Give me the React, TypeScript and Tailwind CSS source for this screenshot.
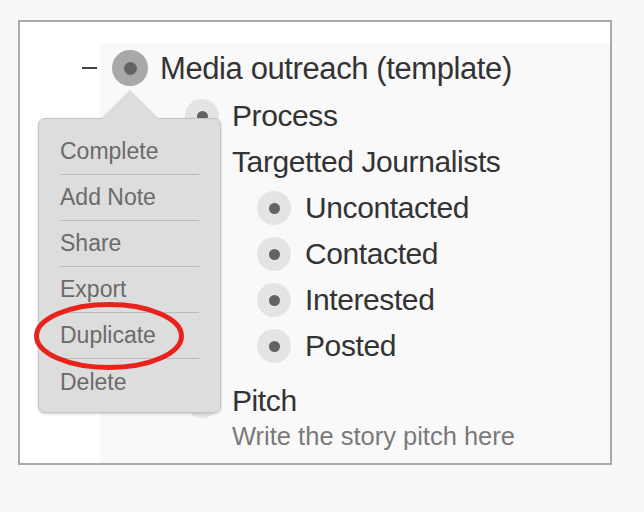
const Bullet = ({ big = false }: { big?: boolean }) =>
  big ? (
    <div className="flex h-9 w-9 shrink-0 items-center justify-center rounded-full bg-[#a9a9a9]">
      <div className="h-[13px] w-[13px] rounded-full bg-[#646464]" />
    </div>
  ) : (
    <div className="flex h-[34px] w-[34px] shrink-0 items-center justify-center rounded-full bg-[#e4e4e4]">
      <div className="h-[11px] w-[11px] rounded-full bg-[#636363]" />
    </div>
  );

const Row = ({ label, indent }: { label: string; indent: "child" | "leaf" }) => (
  <div
    className={
      indent === "child"
        ? "ml-[85px] flex h-[46px] items-center gap-[13px]"
        : "ml-[157px] flex h-[46px] items-center gap-[14px]"
    }
  >
    <Bullet />
    <span className="text-[30px] tracking-[-0.4px] text-[#333]">{label}</span>
  </div>
);

const menu = ["Complete", "Add Note", "Share", "Export", "Duplicate", "Delete"];

export default function App() {
  return (
    <div
      className="min-h-screen bg-[#f8f8f8] pl-[18px] pt-5 antialiased"
      style={{ fontFamily: '"Liberation Sans", Arial, sans-serif' }}
    >
      <div className="relative box-border h-[445px] w-[594px] border-2 border-[#aaaaaa] bg-white pl-20 pt-[21px]">
        <div className="h-full w-full bg-[#f9f9f9] pt-[2px] leading-none">
          {/* root item */}
          <div className="-ml-[18px] flex h-[46px] items-center">
            <div className="h-[2px] w-[15px] bg-[#444]" />
            <div className="ml-[15px]">
              <Bullet big />
            </div>
            <span className="ml-3 text-[31px] tracking-[-0.4px] text-[#333]">Media outreach (template)</span>
          </div>

          <div className="mt-[2px]">
            <Row label="Process" indent="child" />
            <Row label="Targetted Journalists" indent="child" />
            <Row label="Uncontacted" indent="leaf" />
            <Row label="Contacted" indent="leaf" />
            <Row label="Interested" indent="leaf" />
            <Row label="Posted" indent="leaf" />
          </div>

          <div className="mt-[9px]">
            <Row label="Pitch" indent="child" />
            <div className="ml-[132px] flex h-[26px] items-center text-[25.5px] text-[#7a7a7a]">
              Write the story pitch here
            </div>
          </div>
        </div>

        {/* context menu */}
        <div className="absolute left-[18px] top-[96px] h-[295px] w-[183px] rounded-[7px] border border-[#c4c4c4] bg-[#dddddd] pt-[10px] shadow-[0_1px_3px_rgba(0,0,0,0.18)]">
          <div className="absolute left-[71px] top-[-21px] h-10 w-10 rotate-45 bg-[#dddddd]" />
          <div className="relative px-[21px]">
            {menu.map((item, i) => (
              <div
                key={item}
                className={
                  i < menu.length - 1
                    ? "flex h-[46px] items-center border-b border-[#bcbcbc] text-[23px] leading-none text-[#6b6b6b]"
                    : "flex h-[46px] items-center text-[23px] leading-none text-[#6b6b6b]"
                }
              >
                {item}
              </div>
            ))}
          </div>
        </div>

        {/* annotation */}
        <svg className="pointer-events-none absolute left-[9px] top-[276px]" width="160" height="76" viewBox="0 0 160 76">
          <ellipse cx="80" cy="38" rx="72.5" ry="31.5" fill="none" stroke="#e8231c" strokeWidth="5" />
        </svg>
      </div>
    </div>
  );
}
